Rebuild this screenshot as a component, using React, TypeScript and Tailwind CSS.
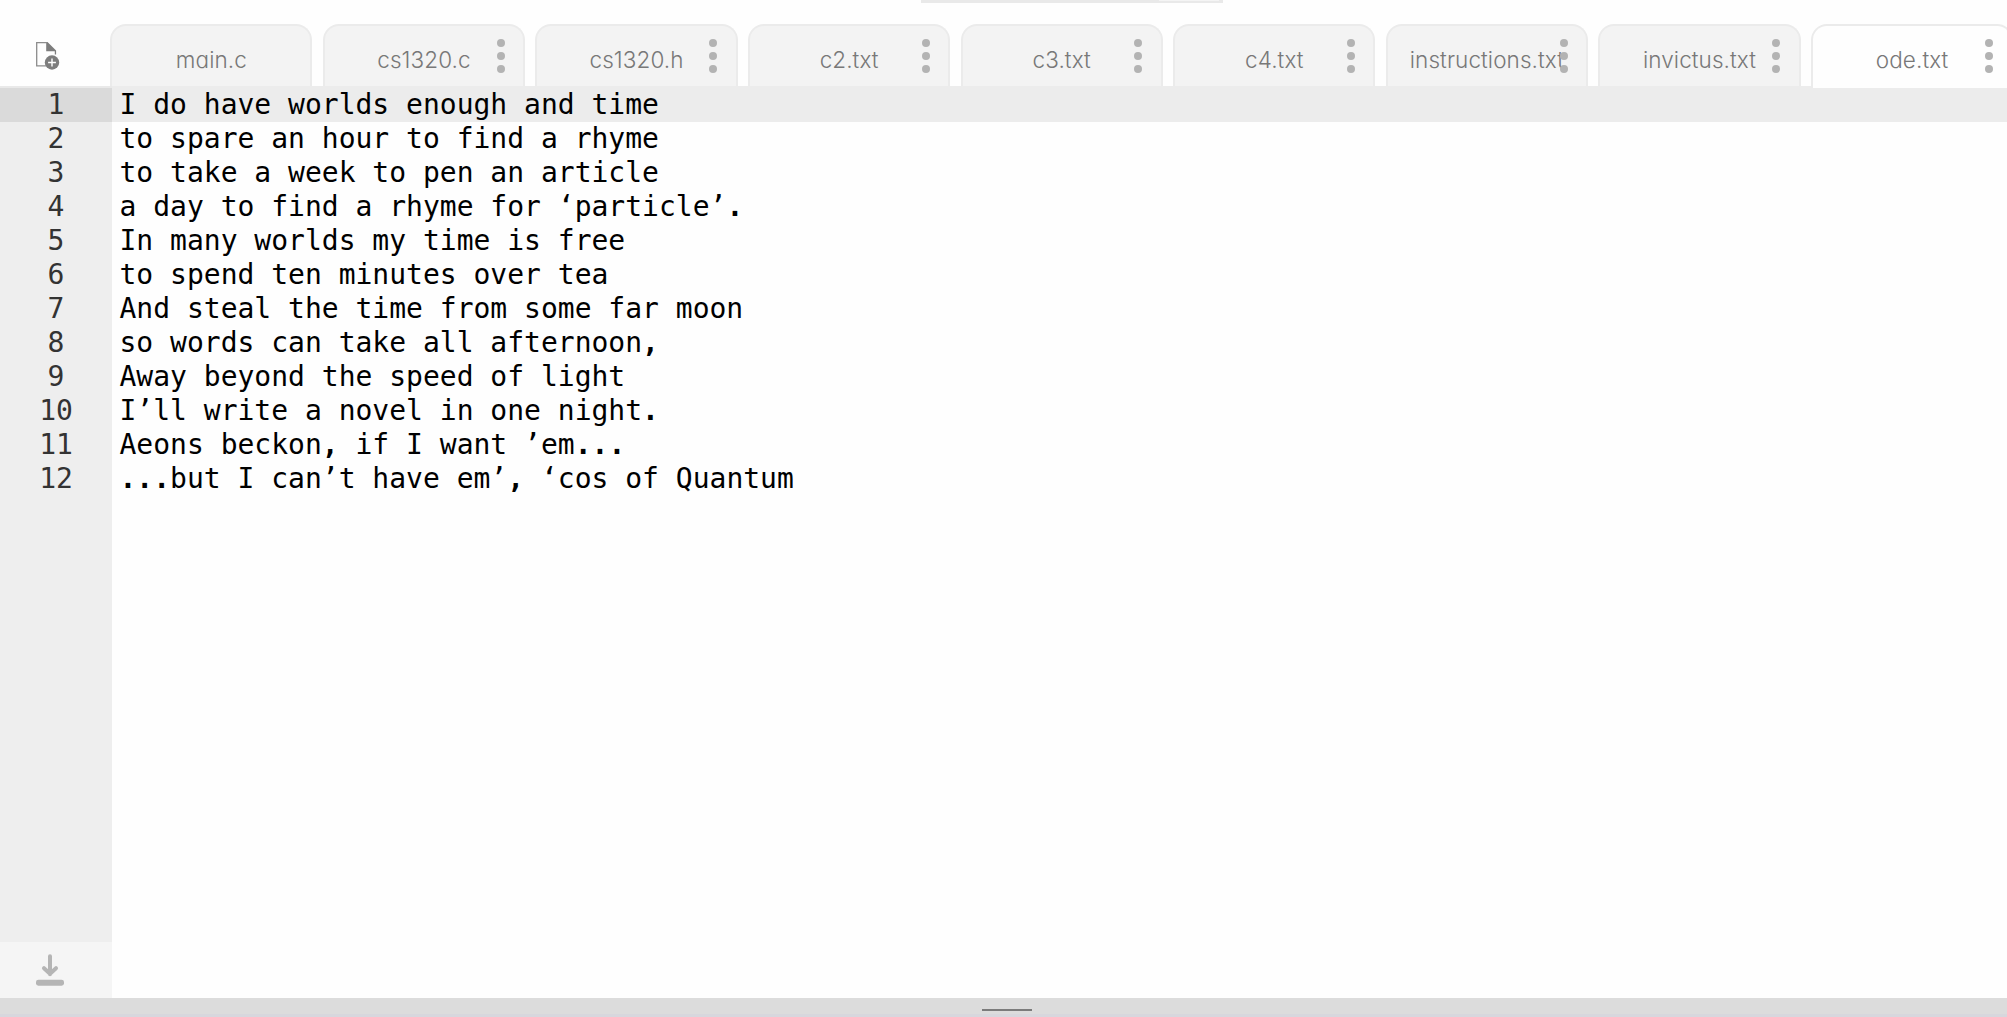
import clsx from "clsx";

interface Tab {
  name: string;
  menu: boolean;
}

const tabs: Tab[] = [
  { name: "main.c", menu: false },
  { name: "cs1320.c", menu: true },
  { name: "cs1320.h", menu: true },
  { name: "c2.txt", menu: true },
  { name: "c3.txt", menu: true },
  { name: "c4.txt", menu: true },
  { name: "instructions.txt", menu: true },
  { name: "invictus.txt", menu: true },
  { name: "ode.txt", menu: true },
];

const lines = [
  "I do have worlds enough and time",
  "to spare an hour to find a rhyme",
  "to take a week to pen an article",
  "a day to find a rhyme for ‘particle’.",
  "In many worlds my time is free",
  "to spend ten minutes over tea",
  "And steal the time from some far moon",
  "so words can take all afternoon,",
  "Away beyond the speed of light",
  "I’ll write a novel in one night.",
  "Aeons beckon, if I want ’em...",
  "...but I can’t have em’, ‘cos of Quantum",
];

function NewFileIcon() {
  return (
    <svg width="26" height="30" viewBox="0 0 26 30" fill="none">
      <path d="M11.5 1.7H1.7v23.1h10" stroke="#8c8c8c" strokeWidth="1.3" />
      <path d="M11.2 1h1.3l8.6 8.6v3.9h-1.3v-3.3h-8.6z" fill="#7d7d7d" />
      <circle cx="17" cy="21.5" r="7.2" fill="#7d7d7d" />
      <path d="M17 17.6v7.8M13.1 21.5h7.8" stroke="#fff" strokeWidth="1.4" />
    </svg>
  );
}

function DownloadIcon() {
  return (
    <svg width="28" height="32" viewBox="0 0 28 32" fill="none">
      <path
        d="M14 2.2v18M8 14.2l6 5.6 6-5.6"
        stroke="#b5b5b5"
        strokeWidth="4"
        strokeLinecap="round"
        strokeLinejoin="round"
      />
      <rect x="0" y="25.7" width="28" height="6" rx="2.4" fill="#b5b5b5" />
    </svg>
  );
}

function TabMenu() {
  return (
    <div className="absolute right-[18.5px] top-[13.3px] flex flex-col gap-[4.7px]">
      <span className="size-2 rounded-full bg-[#b3b3b3]" />
      <span className="size-2 rounded-full bg-[#b3b3b3]" />
      <span className="size-2 rounded-full bg-[#b3b3b3]" />
    </div>
  );
}

// Periods and commas are drawn heavier than the letters
function CodeLine({ text }: { text: string }) {
  return (
    <>
      {text.split(/([.,]+)/).map((part, i) =>
        /^[.,]+$/.test(part) ? (
          <span key={i} className="font-bold">
            {part}
          </span>
        ) : (
          part
        )
      )}
    </>
  );
}

export default function App() {
  const active = "ode.txt";

  return (
    <div className="flex h-[1017px] w-full flex-col overflow-hidden bg-[#fefefe]">
      <header className="flex h-[88px] shrink-0 flex-col">
        <div className="ml-[921px] flex h-[3px] w-[302px] shrink-0 justify-end bg-[#e9e9e9]">
          <div className="mr-1 h-px w-[60px] bg-[#f4f4f4]" />
        </div>
        <div className="mt-[21px] flex h-16 w-full">
          <div className="w-[110.2px] shrink-0 pl-[35px] pt-[17px]">
            <NewFileIcon />
          </div>
          <div className="flex shrink-0 gap-[10.3px]">
            {tabs.map((tab) => (
              <div
                key={tab.name}
                className={clsx(
                  "relative flex w-[202.3px] shrink-0 justify-center rounded-t-[16px] border-2 border-b-0 border-[#ebebeb] pt-4",
                  tab.name === active ? "z-10 h-16 bg-[#fefefe]" : "h-[62px] bg-[#f3f3f3]"
                )}
              >
                <span className="whitespace-nowrap font-['Inter',sans-serif] text-[22.5px] font-[340] leading-[36px] tracking-[0.08px] text-[#787878] [font-feature-settings:'cv11']">
                  {tab.name}
                </span>
                {tab.menu && <TabMenu />}
              </div>
            ))}
          </div>
        </div>
      </header>

      <main className="flex min-h-0 flex-1 font-['DejaVu_Sans_Mono',monospace] text-[28px] leading-[34px]">
        <aside className="flex w-28 shrink-0 flex-col bg-[#eee] text-center text-[#333]">
          {lines.map((_, i) => (
            <div
              key={i}
              className={clsx("h-[34px]", i === 0 && "bg-[#dadada] shadow-[0_-2px_0_#e9e9e9]")}
            >
              {i + 1}
            </div>
          ))}
          <div className="mt-auto h-14 bg-[#f5f5f5] pl-9 pt-3">
            <DownloadIcon />
          </div>
        </aside>
        <section className="min-w-0 flex-1 text-black">
          {lines.map((line, i) => (
            <div
              key={i}
              className={clsx(
                "h-[34px] whitespace-pre pl-[7.5px]",
                i === 0 && "bg-[#ececec] shadow-[0_-2px_0_#ececec]"
              )}
            >
              <CodeLine text={line} />
            </div>
          ))}
        </section>
      </main>

      <footer className="flex h-[19px] shrink-0 border-b-[3px] border-[#d7d7dd] bg-[#dcdcdc] pl-[982px] pt-[11px]">
        <div className="h-0.5 w-[50px] bg-[#7b7b7b]" />
      </footer>
    </div>
  );
}
